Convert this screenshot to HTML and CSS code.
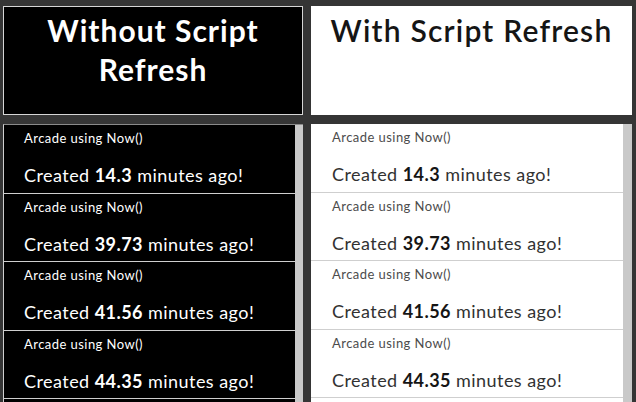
FILE: index.html
```html
<!DOCTYPE html>
<html>
<head>
<meta charset="utf-8">
<link rel="stylesheet" href="styles.css">
</head>
<body>
<div class="dash">
  <div class="col col-left">
    <div class="header header-dark"><h1 class="title title-bold">Without Script Refresh</h1></div>
    <div class="list list-dark">
      <div class="rows">
        <div class="row"><div class="label">Arcade using Now()</div><div class="value">Created <b>14.3</b> minutes ago!</div></div>
        <div class="row"><div class="label">Arcade using Now()</div><div class="value">Created <b>39.73</b> minutes ago!</div></div>
        <div class="row"><div class="label">Arcade using Now()</div><div class="value">Created <b>41.56</b> minutes ago!</div></div>
        <div class="row"><div class="label">Arcade using Now()</div><div class="value">Created <b>44.35</b> minutes ago!</div></div>
      </div>
      <div class="scrollbar"></div>
    </div>
  </div>
  <div class="col col-right">
    <div class="header header-light"><h1 class="title title-demi">With Script Refresh</h1></div>
    <div class="list list-light">
      <div class="rows">
        <div class="row"><div class="label">Arcade using Now()</div><div class="value">Created <b>14.3</b> minutes ago!</div></div>
        <div class="row"><div class="label">Arcade using Now()</div><div class="value">Created <b>39.73</b> minutes ago!</div></div>
        <div class="row"><div class="label">Arcade using Now()</div><div class="value">Created <b>41.56</b> minutes ago!</div></div>
        <div class="row"><div class="label">Arcade using Now()</div><div class="value">Created <b>44.35</b> minutes ago!</div></div>
      </div>
      <div class="scrollbar scrollbar-wide"></div>
    </div>
  </div>
</div>
</body>
</html>
```

FILE: styles.css
```css
html, body {
  margin: 0;
  padding: 0;
  height: 100%;
  overflow: hidden;
}
body {
  background: #353535;
  font-family: Lato, "Noto Sans", sans-serif;
}
.dash {
  display: flex;
  gap: 8px;
  padding: 6px 4px 0 3px;
  height: 100%;
  box-sizing: border-box;
}
.col {
  display: flex;
  flex-direction: column;
  gap: 9px;
  min-height: 0;
}
.col-left { width: 300px; }
.col-right { flex: 1; }
.header {
  height: 109px;
  box-sizing: border-box;
  border: 1px solid #d6d6d6;
  padding-top: 4px;
  flex: none;
}
.header-dark { background: #000; color: #fff; }
.header-light { background: #fff; color: #151515; border-color: #fff; }
.title {
  margin: 0;
  font-size: 30px;
  line-height: 39px;
  text-align: center;
}
.title-bold { font-weight: 700; letter-spacing: 1px; }
.title-demi { font-weight: 600; letter-spacing: 1.2px; }
.list {
  flex: 1;
  display: flex;
  min-height: 0;
  overflow: hidden;
}
.list-dark { background: #000; color: #fff; border-left: 1px solid #cfcfcf; border-top: 1px solid #8a8a8a; }
.list-light { background: #fff; color: #323232; }
.rows { flex: 1; }
.row {
  height: 68.5px;
  box-sizing: border-box;
  border-bottom: 1px solid #cfcfcf;
  padding: 5px 0 0 20px;
}
.list-light .row { padding-left: 21px; }
.label {
  font-size: 13px;
  line-height: 16px;
  letter-spacing: 0.45px;
}
.list-light .label { color: #4c4c4c; }
.value {
  margin-top: 18px;
  font-size: 18px;
  line-height: 22px;
  letter-spacing: 0.45px;
}
.value b { font-weight: 700; }
.list-light .value b { color: #151515; }
.scrollbar {
  width: 8px;
  background: #c9c9c9;
}
.scrollbar-wide { width: 9px; }
```
